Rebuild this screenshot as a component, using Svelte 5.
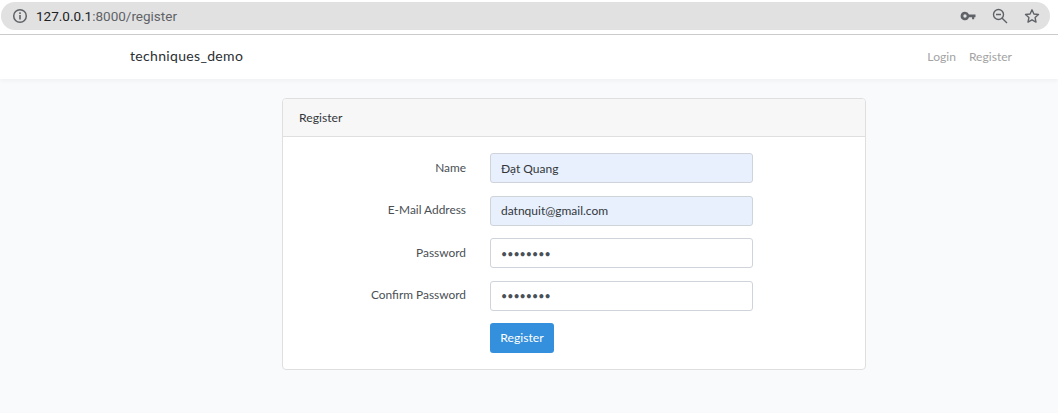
<script>
  let name = 'Đạt Quang';
  let email = 'datnquit@gmail.com';
  let password = 'password';
  let confirm = 'password';
</script>

<div class="browser">
  <div class="omnibox">
    <svg class="info" width="16" height="16" viewBox="0 0 16 16" fill="none">
      <circle cx="8" cy="8" r="6.300" stroke="#5f6368" stroke-width="1.500" />
      <rect x="7.200" y="7" width="1.600" height="4.500" fill="#5f6368" />
      <rect x="7.200" y="4.300" width="1.600" height="1.700" fill="#5f6368" />
    </svg>
    <span class="url"><span class="host">127.0.0.1</span>:8000/register</span>
    <div class="tools">
      <svg width="16" height="16" viewBox="0 0 16 16" fill="#5f6368">
        <path d="M5 3.700a4.300 4.300 0 0 1 4 2.800h6.500v2.800h-1.300v1.900h-2.100V9.300H9a4.300 4.300 0 1 1-4-5.600zm0 2.600a1.700 1.700 0 1 0 0 3.400 1.700 1.700 0 0 0 0-3.400z" />
      </svg>
      <svg width="16" height="16" viewBox="0 0 16 16" fill="none" stroke="#5f6368" stroke-width="1.400">
        <circle cx="6.500" cy="6.500" r="5" />
        <path d="M10.200 10.200 15 15M4 6.500h5" />
      </svg>
      <svg width="16" height="16" viewBox="0 0 16 16" fill="none" stroke="#5f6368" stroke-width="1.400">
        <path d="M8 1.800l1.900 4.200 4.600.5-3.400 3.100.9 4.500L8 11.800l-4 2.300.9-4.500L1.500 6.500l4.600-.5z" stroke-linejoin="round" />
      </svg>
    </div>
  </div>
</div>

<nav class="navbar">
  <span class="brand">techniques_demo</span>
  <div class="links">
    <span>Login</span>
    <span>Register</span>
  </div>
</nav>

<main>
  <div class="card">
    <div class="card-header">Register</div>
    <form class="card-body" on:submit|preventDefault>
      <div class="row">
        <label for="name">Name</label>
        <input id="name" class="filled" type="text" bind:value={name} />
      </div>
      <div class="row">
        <label for="email">E-Mail Address</label>
        <input id="email" class="filled" type="text" bind:value={email} />
      </div>
      <div class="row">
        <label for="password">Password</label>
        <input id="password" class="secret" type="password" bind:value={password} />
      </div>
      <div class="row">
        <label for="confirm">Confirm Password</label>
        <input id="confirm" class="secret" type="password" bind:value={confirm} />
      </div>
      <div class="row last">
        <span class="spacer"></span>
        <button type="submit">Register</button>
      </div>
    </form>
  </div>
</main>

<style>
  :global(body) {
    background: #f8fafc;
    font-family: "Lato", "Noto Sans", sans-serif;
    font-size: 12px;
    color: #212529;
    overflow: hidden;
  }

  .browser {
    background: #fff;
    height: 35px;
    padding: 2px 8px 0 1px;
    box-sizing: border-box;
    border-bottom: 1px solid #ccc;
  }

  .omnibox {
    display: flex;
    align-items: center;
    height: 28px;
    background: #e1e1e1;
    border-radius: 14px;
    padding: 0 10px 0 11px;
  }

  .info {
    margin-right: 8px;
  }

  .url {
    font-family: "Roboto", sans-serif;
    font-size: 13.500px;
    color: #5f6368;
  }

  .host {
    color: #202124;
  }

  .tools {
    margin-left: auto;
    display: flex;
    gap: 16px;
  }

  .navbar {
    display: flex;
    align-items: center;
    justify-content: space-between;
    height: 44px;
    box-sizing: border-box;
    padding: 0 46px 2px 130px;
    background: #fff;
    box-shadow: 0 2px 4px rgba(0, 0, 0, 0.04);
  }

  .brand {
    font-size: 14px;
    letter-spacing: 0.33px;
    color: #2b2f33;
    margin-bottom: 2px;
  }

  .links {
    display: flex;
    gap: 13px;
    color: #a3a3a3;
    font-size: 12.100px;
  }

  main {
    padding: 19px 192px 0 282px;
  }

  .card {
    background: #fff;
    border: 1px solid #dfdfdf;
    border-radius: 4px;
    height: 272px;
    box-sizing: border-box;
  }

  .card-header {
    height: 37px;
    line-height: 37px;
    padding: 0 16px;
    background: #f7f7f7;
    border-bottom: 1px solid #dfdfdf;
    border-radius: 3px 3px 0 0;
    font-size: 12.200px;
    color: #33373b;
  }

  .card-body {
    padding-top: 16px;
  }

  .row {
    display: flex;
    align-items: center;
    gap: 24px;
    margin-bottom: 12.500px;
  }

  label,
  .spacer {
    width: 183px;
    padding-bottom: 2px;
    text-align: right;
    font-size: 11.900px;
    color: #4a4f54;
  }

  input {
    width: 263px;
    height: 30px;
    box-sizing: border-box;
    padding: 0 10px;
    border: 1px solid #ced4da;
    border-radius: 3px;
    background: #fff;
    font-family: inherit;
    font-size: 12px;
    color: #495057;
    outline: none;
  }

  input.filled {
    background: #e8f0fe;
    color: #33373b;
  }

  input.secret {
    font-size: 10.700px;
  }

  button {
    width: 64px;
    height: 30px;
    padding: 0 0 2px;
    border: none;
    border-radius: 3px;
    background: #3490dc;
    color: #fff;
    font-family: inherit;
    font-size: 12.200px;
  }
</style>
